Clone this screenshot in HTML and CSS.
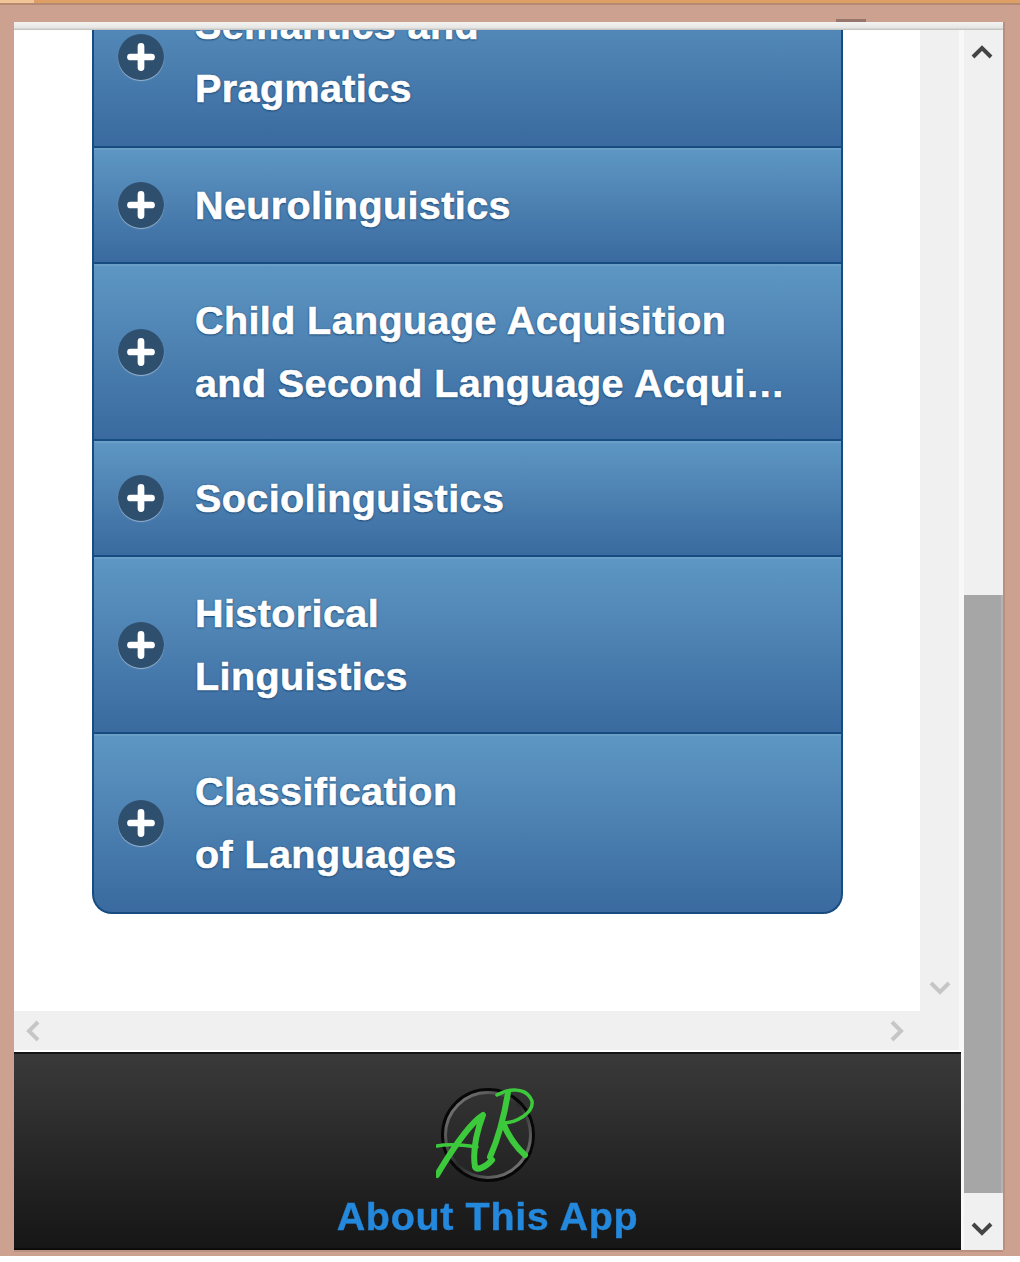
FILE: index.html
```html
<!DOCTYPE html>
<html lang="en">
<head>
<meta charset="utf-8">
<title>Linguistics</title>
<link rel="stylesheet" href="styles.css">
</head>
<body>
<div class="topstrip"><span class="topstrip-left"></span></div>
<div class="chrome">
  <span class="tick"></span>
  <div class="frame">
    <div class="frame-top"></div>
    <div class="frame-body">
      <div class="app">
        <div class="viewport">
          <div class="pane">
            <div class="content">
              <ul class="list">
                <li class="row tall first"><span class="plus"><svg viewBox="0 0 48 48"><path d="M24 13v22M13 24h22"/></svg></span><span class="label">Semantics and<br>Pragmatics</span></li>
                <li class="row"><span class="plus"><svg viewBox="0 0 48 48"><path d="M24 13v22M13 24h22"/></svg></span><span class="label">Neurolinguistics</span></li>
                <li class="row tall"><span class="plus"><svg viewBox="0 0 48 48"><path d="M24 13v22M13 24h22"/></svg></span><span class="label">Child Language Acquisition<br>and Second Language Acqui…</span></li>
                <li class="row"><span class="plus"><svg viewBox="0 0 48 48"><path d="M24 13v22M13 24h22"/></svg></span><span class="label">Sociolinguistics</span></li>
                <li class="row tall"><span class="plus"><svg viewBox="0 0 48 48"><path d="M24 13v22M13 24h22"/></svg></span><span class="label">Historical<br>Linguistics</span></li>
                <li class="row tall last"><span class="plus"><svg viewBox="0 0 48 48"><path d="M24 13v22M13 24h22"/></svg></span><span class="label">Classification<br>of Languages</span></li>
              </ul>
            </div>
            <div class="hbar">
              <svg class="arrow" viewBox="0 0 20 24"><path d="M15 3 6 12l9 9"/></svg>
              <svg class="arrow" viewBox="0 0 20 24"><path d="M5 3l9 9-9 9"/></svg>
            </div>
          </div>
          <div class="vbar">
            <svg class="arrow-v" viewBox="0 0 24 20"><path d="M3 4l9 9 9-9"/></svg>
          </div>
        </div>
        <footer class="footer">
          <svg class="logo" viewBox="0 0 104 100">
            <defs>
              <linearGradient id="ring" x1="0" y1="0" x2="1" y2="1">
                <stop offset="0" stop-color="#8a8a8a"/>
                <stop offset=".5" stop-color="#2a2a2a"/>
                <stop offset="1" stop-color="#8a8a8a"/>
              </linearGradient>
            </defs>
            <circle cx="52" cy="48" r="45.5" fill="none" stroke="#070707" stroke-width="3"/>
            <circle cx="52" cy="48" r="42.5" fill="none" stroke="url(#ring)" stroke-width="3"/>
            <g class="logo-strokes">
              <path class="thick" d="M1 88C14 66 34 36 47 28 41 44 36 62 39 80c2 4 11 0 17-7"/>
              <path class="thin" d="M1 59c13-3 27-1 40 1"/>
              <path class="thick" d="M72 6C68 30 62 52 54 70"/>
              <path class="thin" d="M61 8C72 2 90-1 96 14c2 12-16 22-29 22"/>
              <path class="thick" d="M67 36c5 12 13 24 22 32"/>
            </g>
          </svg>
          <a class="about">About This App</a>
        </footer>
      </div>
      <div class="outer-scroll">
        <div class="outer-track">
          <svg class="arrow-dark" viewBox="0 0 24 20"><path d="M3 14l9-9 9 9"/></svg>
        </div>
        <div class="outer-thumb"></div>
        <div class="outer-end">
          <svg class="arrow-dark" viewBox="0 0 24 20"><path d="M3 5l9 9 9-9"/></svg>
        </div>
      </div>
    </div>
  </div>
</div>
<div class="bottomstrip"></div>
</body>
</html>
```
FILE: styles.css
```css
* { box-sizing: border-box; }
html, body { margin: 0; padding: 0; }
body {
  width: 1020px;
  height: 1262px;
  overflow: hidden;
  background: #cca18f;
  font-family: "Liberation Sans", Arial, sans-serif;
  display: flex;
  flex-direction: column;
}
.topstrip {
  height: 5px;
  flex: none;
  background: #dd9f66;
  border-bottom: 2px solid #b48a72;
}
.topstrip-left {
  display: block;
  width: 34px;
  height: 3px;
  background: #f2c596;
}
.chrome {
  flex: 1;
  padding: 17px 17px 6px 14px;
  position: relative;
}
.tick {
  position: absolute;
  left: 836px;
  top: 14px;
  width: 30px;
  height: 3px;
  background: #96766c;
}
.frame {
  height: 100%;
  display: flex;
  flex-direction: column;
  background: #f0f0f0;
  box-shadow: 2px 0 0 #b98f7f, 0 2px 0 #b98f7f;
  filter: blur(.7px);
}
.frame-top {
  height: 8px;
  flex: none;
  background: linear-gradient(#f4f4f2, #e6e6e4 70%, #bdbdbd);
}
.frame-body {
  flex: 1;
  display: flex;
  min-height: 0;
}
.app {
  width: 947px;
  flex: none;
  display: flex;
  flex-direction: column;
}
.viewport {
  flex: 1;
  display: flex;
  min-height: 0;
  background: #f0f0f0;
}
.pane {
  width: 906px;
  flex: none;
  display: flex;
  flex-direction: column;
}
.content {
  flex: 1;
  min-height: 0;
  overflow: hidden;
  background: #fff;
  padding: 0 77px 0 78px;
}
.list {
  list-style: none;
  margin: -59px 0 0;
  padding: 0;
  border-radius: 0 0 20px 20px;
}
.row {
  display: flex;
  align-items: center;
  height: 116px;
  padding-left: 24px;
  background: linear-gradient(#5e97c3, #3a6a9f);
  border: 2px solid #174c80;
  border-width: 0 2px 2px;
  box-shadow: inset 0 2px 0 rgba(255, 255, 255, .08);
  color: #fff;
  font-size: 39.5px;
  font-weight: 700;
  letter-spacing: .4px;
  line-height: 63px;
  -webkit-text-stroke: .6px #fff;
  text-shadow: 0 1px 2px #123f6c, 0 0 2px #1d4c7c;
  white-space: nowrap;
}
.row.tall { height: 177px; }
.row.first { padding-bottom: 4px; }
.row.last {
  height: 180px;
  border-radius: 0 0 20px 20px;
}
.plus {
  width: 46px;
  height: 46px;
  flex: none;
  border-radius: 50%;
  background: #2f4f6f;
  box-shadow: 0 1px 1px rgba(255, 255, 255, .45);
  margin-right: 31px;
  display: flex;
}
.plus svg { width: 46px; height: 46px; }
.plus path {
  fill: none;
  stroke: #fff;
  stroke-width: 7;
  stroke-linecap: round;
}
.hbar {
  height: 39px;
  flex: none;
  display: flex;
  justify-content: space-between;
  align-items: center;
  padding: 0 13px 0 9px;
  background: #f0f0f0;
}
.arrow { width: 20px; height: 24px; }
.arrow path, .arrow-v path {
  fill: none;
  stroke: #c6c6c6;
  stroke-width: 4;
}
.vbar {
  flex: 1;
  display: flex;
  flex-direction: column;
  justify-content: flex-end;
  align-items: center;
  padding-bottom: 51px;
  border-right: 2px solid #f8f8f8;
}
.arrow-v { width: 24px; height: 20px; }
.footer {
  height: 200px;
  flex: none;
  border-top: 2px solid #fff;
  box-shadow: inset 0 2px 0 #151515;
  background: linear-gradient(#3a3a3a, #161616);
  border-bottom: 2px solid #0c0c0c;
  display: flex;
  flex-direction: column;
  align-items: center;
}
.logo {
  width: 104px;
  height: 100px;
  margin-top: 35px;
  flex: none;
}
.logo-strokes path {
  fill: none;
  stroke: #3cca3c;
  stroke-linecap: round;
  stroke-linejoin: round;
}
.logo-strokes .thick { stroke-width: 6; }
.logo-strokes .thin { stroke-width: 3.5; }
.about {
  font-size: 39.5px;
  font-weight: 700;
  letter-spacing: .65px;
  line-height: 48px;
  color: #2488dc;
  -webkit-text-stroke: .4px #2488dc;
  margin-top: 5px;
}
.outer-scroll {
  flex: 1;
  display: flex;
  flex-direction: column;
  border-left: 3px solid #f8f8f8;
  background: #f0f0f0;
}
.outer-track {
  height: 565px;
  flex: none;
  padding: 13px 3px 0 0;
  display: flex;
  justify-content: center;
  align-items: flex-start;
}
.outer-thumb {
  flex: 1;
  background: #a6a6a6;
  border-right: 2px solid #b4b4b4;
}
.outer-end {
  height: 57px;
  flex: none;
  display: flex;
  justify-content: center;
  align-items: flex-end;
  padding: 0 3px 11px 0;
}
.arrow-dark { width: 24px; height: 20px; }
.arrow-dark path {
  fill: none;
  stroke: #444;
  stroke-width: 4;
}
.bottomstrip {
  height: 6px;
  flex: none;
  background: #fff;
}
```
